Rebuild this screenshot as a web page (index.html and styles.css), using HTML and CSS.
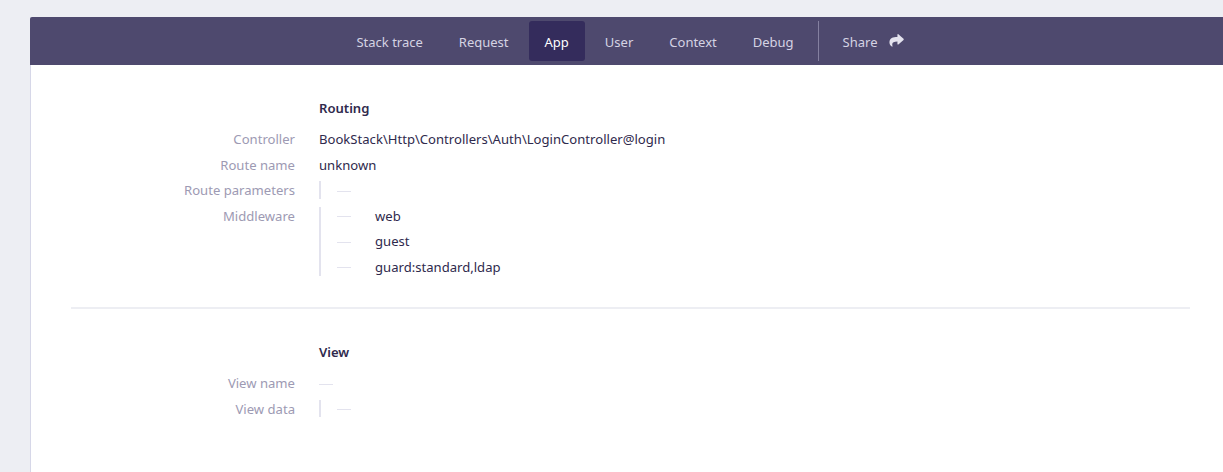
FILE: index.html
```html
<!DOCTYPE html>
<html lang="en">

<head>
  <meta charset="UTF-8">
  <title>App</title>
  <link rel="stylesheet" href="styles.css">
</head>

<body>
  <main class="card">
    <!-- Tabs -->
    <nav class="tabs">
      <a class="tab">Stack trace</a>
      <a class="tab">Request</a>
      <a class="tab active">App</a>
      <a class="tab">User</a>
      <a class="tab">Context</a>
      <a class="tab">Debug</a>
      <span class="tab-divider"></span>
      <a class="tab share">Share
        <svg class="share-icon" viewBox="0 0 16 14" width="15" height="13">
          <path d="M15.6 5 10 .2C9.600-.1 9 .1 9 .7v2.500C4.200 3.300.4 4.300.4 9.100c0 2 1.200 3.500 2.500 4.400.4.300 1 0 .8-.6C2.700 9.500 4.400 8.300 9 8.200v2.600c0 .6.600.8 1 .5l5.600-4.900c.3-.4.300-1 0-1.400z" />
        </svg>
      </a>
    </nav>

    <div class="content">
      <!-- Routing section -->
      <section class="group routing">
        <h3 class="group-title">Routing</h3>
        <dl class="defs">
          <dt>Controller</dt>
          <dd>BookStack\Http\Controllers\Auth\LoginController@login</dd>
          <dt>Route name</dt>
          <dd>unknown</dd>
          <dt>Route parameters</dt>
          <dd>
            <div class="tree">
              <div class="tree-row"><span class="dash"></span></div>
            </div>
          </dd>
          <dt>Middleware</dt>
          <dd>
            <div class="tree">
              <div class="tree-row"><span class="dash"></span><span class="tree-value">web</span></div>
              <div class="tree-row"><span class="dash"></span><span class="tree-value">guest</span></div>
              <div class="tree-row"><span class="dash"></span><span class="tree-value">guard:standard,ldap</span></div>
            </div>
          </dd>
        </dl>
      </section>

      <hr class="separator">

      <!-- View section -->
      <section class="group view">
        <h3 class="group-title">View</h3>
        <dl class="defs">
          <dt>View name</dt>
          <dd><span class="dash"></span></dd>
          <dt>View data</dt>
          <dd>
            <div class="tree">
              <div class="tree-row"><span class="dash"></span></div>
            </div>
          </dd>
        </dl>
      </section>
    </div>
  </main>
</body>

</html>
```

FILE: styles.css
```css
html,
body {
  overflow: hidden;
}

body {
  background-color: #edeef3;
  color: #2f2a4d;
  font-family: "Noto Sans", "Open Sans", sans-serif;
  font-size: 13.1px;
  line-height: 25.6px;
  margin: 0;
  height: 472px;
  padding: 17px 0 0 30px;
  box-sizing: border-box;
}

.card {
  width: 1200px;
  height: 455px;
  background-color: white;
  border-left: 1px solid #d6d7e8;
  border-radius: 2px 2px 0 0;
  box-sizing: border-box;
}

.tabs {
  display: flex;
  justify-content: center;
  align-items: center;
  gap: 4px;
  height: 48px;
  margin-left: -1px;
  background-color: #4e496e;
  border-radius: 2px 2px 0 0;
}

.tab {
  display: flex;
  align-items: center;
  height: 40px;
  padding: 3px 16px 0;
  box-sizing: border-box;
  color: #d5d3e3;
  font-size: 13px;
  border-radius: 3px;
}

.tab.active {
  background-color: #342c5c;
  color: white;
}

.tab-divider {
  width: 1px;
  height: 40px;
  margin: 0 4px;
  background-color: #8480a0;
}

.share-icon {
  margin: 0 0 4px 11px;
  fill: #e4e3ee;
}

.content {
  padding: 0 40px;
}

.group-title {
  margin: 0 0 5.6px 248px;
  font-size: 13.1px;
  font-weight: 600;
  line-height: 25.6px;
}

.routing {
  padding: 31px 0 28.4px;
}

.view {
  padding: 31px 0 0;
}

.separator {
  height: 2px;
  margin: 0;
  border: none;
  background-color: #edeef3;
}

.defs {
  display: grid;
  grid-template-columns: 224px 1fr;
  column-gap: 24px;
  margin: 0;
}

dt {
  text-align: right;
  color: #9d9ab3;
}

dd {
  margin: 0;
}

.tree {
  display: flex;
  flex-direction: column;
  gap: 8.2px;
  margin: 3px 0;
  border-left: 2px solid #e3e3ee;
  padding-left: 16px;
}

.tree-row {
  display: flex;
  align-items: center;
  height: 17.4px;
  padding-top: 2px;
  box-sizing: border-box;
}

.dash {
  display: inline-block;
  width: 14px;
  height: 1px;
  background-color: #e3e3ee;
  vertical-align: middle;
}

.tree-value {
  margin-left: 24px;
}
```
